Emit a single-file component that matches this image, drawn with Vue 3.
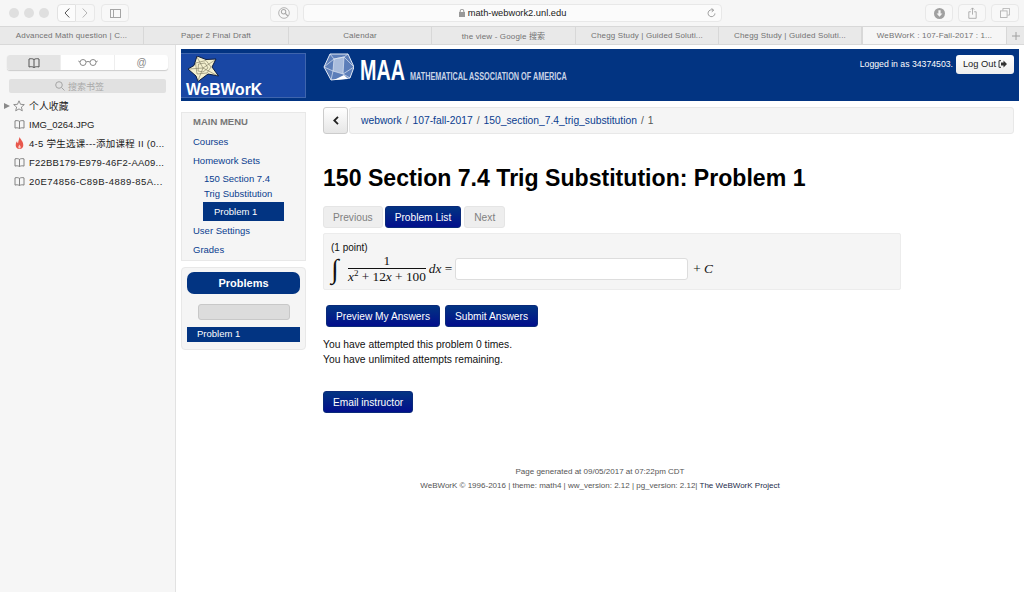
<script setup>
const tabs = [
  { t: 'Advanced Math question | C...', w: 144 },
  { t: 'Paper 2 Final Draft', w: 145 },
  { t: 'Calendar', w: 143 },
  { t: 'the view - Google 搜索', w: 144 },
  { t: 'Chegg Study | Guided Soluti...', w: 143 },
  { t: 'Chegg Study | Guided Soluti...', w: 143 },
  { t: 'WeBWorK : 107-Fall-2017 : 1...', w: 145, active: true },
]
const bookmarks = [
  { t: 'IMG_0264.JPG', ls: 0 },
  { t: '4-5 学生选课---添加课程 II (0...', fire: true, ls: 0.28 },
  { t: 'F22BB179-E979-46F2-AA09...', ls: 0.22 },
  { t: '20E74856-C89B-4889-85A...', ls: 0.45 },
]
</script>

<template>
  <div class="win">
    <header class="toolbar">
      <div class="lights"><i></i><i></i><i></i></div>
      <div class="navpair">
        <span class="tb first"><svg width="6" height="10" viewBox="0 0 6 10"><path d="M5.300.5 1 5l4.300 4.500" fill="none" stroke="#555" stroke-width="1"/></svg></span>
        <span class="tb second"><svg width="6" height="10" viewBox="0 0 6 10"><path d="M.7.5 5 5 .7 9.500" fill="none" stroke="#b5b5b5" stroke-width="1"/></svg></span>
      </div>
      <span class="tb side"><svg width="11" height="9" viewBox="0 0 11 9"><rect x=".5" y=".5" width="10" height="8" fill="none" stroke="#a5a5a5"/><path d="M3.500 1v7" stroke="#a5a5a5"/></svg></span>
      <span class="tb privacy"><svg width="12" height="12" viewBox="0 0 14 14"><circle cx="7" cy="7" r="6.200" fill="none" stroke="#a8a8a8"/><circle cx="6.500" cy="5.500" r="2.600" fill="none" stroke="#a8a8a8" stroke-width="1.200"/><path d="M8.500 7.500l3 3" stroke="#a8a8a8" stroke-width="1.400"/></svg></span>
      <div class="url">
        <span class="urltext"><svg width="6" height="8" viewBox="0 0 6 8"><rect y="3" width="6" height="5" fill="#999"/><path d="M1.200 3.500V2a1.800 1.800 0 0 1 3.600 0v1.500" fill="none" stroke="#999"/></svg>math-webwork2.unl.edu</span>
        <svg class="reload" width="9" height="10" viewBox="0 0 11 12"><path d="M7.500 2.600A4.200 4.200 0 1 0 9.700 6.500" fill="none" stroke="#8a8a8a"/><path d="M5.500.4 8.300 2.600 5.800 4.600" fill="none" stroke="#8a8a8a"/></svg>
      </div>
      <span class="tb right dl"><svg width="11" height="11" viewBox="0 0 14 14"><circle cx="7" cy="7" r="7" fill="#a0a0a0"/><path d="M5.600 3h2.800v4h2.300L7 11 3.300 7h2.300z" fill="#f6f6f6"/></svg></span>
      <span class="tb right"><svg width="9" height="12" viewBox="0 0 11 14"><path d="M3.500 5.500H1v8h9v-8H7.500M5.500 9V.8M3.500 2.800l2-2 2 2" fill="none" stroke="#a0a0a0"/></svg></span>
      <span class="tb right"><svg width="10" height="10" viewBox="0 0 12 12"><path d="M3.500 3V.5h8v8H9" fill="none" stroke="#adadad"/><rect x=".5" y="3.500" width="8" height="8" fill="none" stroke="#adadad"/></svg></span>
    </header>

    <nav class="tabs">
      <div v-for="(tab, i) in tabs" :key="i" class="tab" :class="{ active: tab.active }" :style="{ width: tab.w + 'px' }">{{ tab.t }}</div>
      <div class="plus"><svg width="8" height="8" viewBox="0 0 8 8"><path d="M4 0v8M0 4h8" stroke="#a0a0a0"/></svg></div>
    </nav>

    <div class="body">
      <aside class="sidebar">
        <div class="seg">
          <span class="on"><svg width="12" height="10" viewBox="0 0 12 10"><path d="M6 1.500C4.500.5 2.500.5 1 1v8c1.500-.5 3.500-.5 5 .5 1.500-1 3.500-1 5-.5V1C9.500.5 7.500.5 6 1.500zM6 1.500v8" fill="none" stroke="#555"/></svg></span>
          <span><svg width="20" height="7" viewBox="0 0 20 7"><circle cx="5" cy="3.500" r="3" fill="none" stroke="#8a8a8a"/><circle cx="15" cy="3.500" r="3" fill="none" stroke="#8a8a8a"/><path d="M8 3c1-.6 3-.6 4 0M2 3 .3 2M18 3l1.700-1" fill="none" stroke="#8a8a8a"/></svg></span>
          <span class="at">@</span>
        </div>
        <div class="search"><svg width="10" height="10" viewBox="0 0 10 10"><circle cx="4" cy="4" r="3.300" fill="none" stroke="#a5a5a5"/><path d="M6.500 6.500 9.500 9.500" stroke="#a5a5a5"/></svg>搜索书签</div>
        <div class="fav">
          <span class="tri"></span>
          <svg width="12" height="12" viewBox="0 0 12 12"><path d="M6 .8l1.500 3.500 3.800.3-2.900 2.500.9 3.700L6 8.900l-3.300 1.900.9-3.700L.7 4.600l3.800-.3z" fill="none" stroke="#777" stroke-width=".8"/></svg>
          <span>个人收藏</span>
        </div>
        <div v-for="b in bookmarks" :key="b.t" class="bm">
          <svg v-if="b.fire" width="11" height="12" viewBox="0 0 11 12"><path d="M5.800 0c.4 2.500 3.400 4 3.400 7.500A3.700 3.700 0 0 1 5.500 12a3.700 3.700 0 0 1-3.700-4.500c0-1.500.7-2.500 1.300-3.200 0 1 .3 1.700.9 2C4.500 4.500 4.800 2 5.800 0z" fill="#e8574c"/><path d="M5.500 7.500c.3 1 1.200 1.300 1.200 2.700a1.200 1.200 0 0 1-2.400 0c0-1 .9-1.700 1.200-2.700z" fill="#f9d0c8"/></svg>
          <svg v-else width="11" height="9" viewBox="0 0 12 10"><path d="M6 1.500C4.500.5 2.500.5 1 1v8c1.500-.5 3.500-.5 5 .5 1.500-1 3.500-1 5-.5V1C9.500.5 7.500.5 6 1.500zM6 1.500v8" fill="none" stroke="#777"/></svg>
          <span :style="{ letterSpacing: b.ls + 'px' }">{{ b.t }}</span>
        </div>
      </aside>

      <main class="page">
        <div class="banner">
          <div class="ww">
            <svg class="star" width="32" height="26" viewBox="0 0 32 26">
              <path d="M10 0 19 3.500 29 3 25 11 31.500 20 21 18 11 25.500 9 20 1 13 7 9.500Z" fill="#f4f0cf" stroke="#0c1c40" stroke-width="1"/>
              <path d="M16 12 10 1M16 12 28 4M16 12 30 19.500M16 12 11 24.500M16 12 2 13M11.500 8 18 7 21 12 16 16 11 15ZM8.500 7 19 4.500 24 11 20 17 10 18Z" fill="none" stroke="#6f6c54" stroke-width=".55"/>
            </svg>
            <span class="wwname">WeBWorK</span>
          </div>
          <div class="maa">
            <svg class="hex" width="31" height="28" viewBox="0 0 31 28">
              <path d="M7 1 25 1 31 14 27 25 8 27 1 14Z" fill="#5c7eb9" stroke="#e4eaf4" stroke-width="1"/>
              <path d="M11 6 21 4 20 21 10 18Z" fill="#a9bcdc"/>
              <path d="M11 27 21 22 25 26Z" fill="#fff"/>
              <path d="M7 1 11 6 21 4 25 1M21 4 31 14 20 21 27 25M20 21 10 18 8 27M10 18 1 14 11 6 10 18M11 6 21 4 20 21" fill="none" stroke="#dde5f2" stroke-width=".7"/>
            </svg>
            <span class="maaname">MAA</span>
            <span class="maafull">MATHEMATICAL ASSOCIATION OF AMERICA</span>
          </div>
          <div class="login">
            <span>Logged in as 34374503.</span>
            <span class="logout">Log Out <svg width="9" height="8" viewBox="0 0 9 8"><path d="M3 .7H1v6.600h2" fill="none" stroke="#333"/><path d="M3 2.500h2.500V.5L9 4 5.500 7.500v-2H3z" fill="#333"/></svg></span>
          </div>
        </div>

        <div class="columns">
          <div class="leftcol">
            <div class="menu">
              <div class="mhead">MAIN MENU</div>
              <a class="mi">Courses</a>
              <a class="mi">Homework Sets</a>
              <a class="sub">150 Section 7.4<br>Trig Substitution</a>
              <a class="cur">Problem 1</a>
              <a class="mi">User Settings</a>
              <a class="mi">Grades</a>
            </div>
            <div class="probs">
              <div class="phead">Problems</div>
              <div class="pbar"></div>
              <div class="pitem">Problem 1</div>
            </div>
          </div>

          <div class="content">
            <div class="crumb">
              <span class="back"><svg width="6" height="9" viewBox="0 0 6 9"><path d="M5 .8 1.300 4.500 5 8.200" fill="none" stroke="#222" stroke-width="1.800"/></svg></span>
              <span class="path"><a>webwork</a><em>/</em><a>107-fall-2017</a><em>/</em><a>150_section_7.4_trig_substitution</a><em>/</em><span class="last">1</span></span>
            </div>
            <h1>150 Section 7.4 Trig Substitution: Problem 1</h1>
            <div class="pager">
              <span class="btn off">Previous</span>
              <span class="btn blue">Problem List</span>
              <span class="btn off next">Next</span>
            </div>
            <div class="well">
              <div class="point">(1 point)</div>
              <div class="math">
                <span class="int">∫</span>
                <span class="frac"><span class="num">1</span><span class="den"><i>x</i><sup>2</sup> + 12<i>x</i> + 100</span></span>
                <span class="dx"><i>dx</i> =</span>
                <span class="input"></span>
                <span class="c">+ <i>C</i></span>
              </div>
            </div>
            <div class="actions">
              <span class="btn blue">Preview My Answers</span>
              <span class="btn blue">Submit Answers</span>
            </div>
            <p class="att">You have attempted this problem 0 times.<br>You have unlimited attempts remaining.</p>
            <div class="emailrow"><span class="btn blue">Email instructor</span></div>
            <footer class="foot">
              <div>Page generated at 09/05/2017 at 07:22pm CDT</div>
              <div>WeBWorK © 1996-2016 | theme: math4 | ww_version: 2.12 | pg_version: 2.12| <b>The WeBWorK Project</b></div>
            </footer>
          </div>
        </div>
      </main>
    </div>
  </div>
</template>

<style>
html, body { margin: 0; padding: 0; background: #fff; overflow: hidden; }
</style>

<style scoped>
.win { width: 1024px; height: 592px; overflow: hidden; font-family: "Liberation Sans", "Noto Sans CJK SC", sans-serif; display: flex; flex-direction: column; background: #fff; }
.toolbar { height: 27px; background: #f6f6f6; display: flex; align-items: center; padding: 0 0 0 9px; box-sizing: border-box; border-bottom: 1px solid #d8d8d8; flex: none; }
.lights { display: flex; gap: 5px; margin-right: 8px; }
.lights i { width: 10px; height: 10px; border-radius: 50%; background: #dfdfdf; }
.tb { height: 18px; display: inline-flex; align-items: center; justify-content: center; border: 1px solid #e8e8e8; border-radius: 4px; background: #f8f8f8; box-sizing: border-box; }
.navpair { display: flex; }
.first { width: 19px; border-radius: 4px 0 0 4px; background: #fcfcfc; border-color: #e2e2e2; }
.second { width: 19px; border-radius: 0 4px 4px 0; border-left: 0; }
.side { width: 28px; margin-left: 6px; }
.privacy { width: 28px; margin-left: 141px; }
.url { width: 419px; height: 18px; margin-left: 5px; border: 1px solid #e8e8e8; border-radius: 4px; box-sizing: border-box; background: #fbfbfb; position: relative; display: flex; align-items: center; justify-content: center; }
.urltext { font-size: 9.300px; color: #222; display: flex; align-items: center; gap: 3px; }
.reload { position: absolute; right: 5px; top: 3px; }
.right { width: 28px; margin-left: 5px; }
.dl { margin-left: 203px; }
.tabs { height: 17px; display: flex; background: #e9e9e9; border-bottom: 1px solid #d9d9d9; flex: none; }
.tab { box-sizing: border-box; height: 17px; border-right: 1px solid #d8d8d8; font-size: 8px; letter-spacing: .15px; color: #727272; display: flex; align-items: center; justify-content: center; white-space: nowrap; flex: none; }
.tab.active { background: #f6f6f6; border-left: 1px solid #d8d8d8; }
.plus { flex: 1; display: flex; align-items: center; justify-content: center; }
.body { flex: 1; display: flex; min-height: 0; }
.sidebar { width: 176px; box-sizing: border-box; background: #f6f6f6; border-right: 1px solid #e2e2e2; flex: none; padding-top: 10px; font-size: 9.500px; color: #222; }
.seg { margin-left: 7px; width: 161px; height: 15px; background: #fff; border-radius: 3px; box-shadow: 0 1px 1px #ccc; display: flex; }
.seg span { flex: 1; display: flex; align-items: center; justify-content: center; border-right: 1px solid #eee; }
.seg .on { background: #e4e4e4; border-radius: 3px 0 0 3px; }
.seg .at { font-size: 10px; color: #888; border: 0; }
.search { margin: 9px 0 0 9px; width: 157px; height: 14px; padding-right: 16px; box-sizing: border-box; background: #e1e1e1; border-radius: 2px; color: #a9a9a9; font-size: 9px; display: flex; align-items: center; justify-content: center; gap: 3px; }
.fav { margin: 6px 0 1.500px 4px; display: flex; align-items: center; height: 14px; font-size: 9.800px; letter-spacing: .1px; }
.fav svg { margin: 0 4px 0 3px; }
.tri { width: 0; height: 0; border-left: 6px solid #8a8a8a; border-top: 3.500px solid transparent; border-bottom: 3.500px solid transparent; }
.bm { height: 19px; margin-left: 14px; display: flex; align-items: center; gap: 4px; white-space: nowrap; }
.bm svg { width: 11px; flex: none; }
.page { flex: 1; min-width: 0; }
.banner { margin: 4px 0 0 5px; height: 52px; background: #023482; width: 838px; display: flex; }
.ww { width: 124px; margin-top: 4px; background: #1947a4; border: 1px solid #3f65ad; border-left: 0; flex: none; box-sizing: content-box; height: 43px; position: relative; }
.star { position: absolute; left: 6px; top: 2px; }
.wwname { position: absolute; left: 5px; bottom: -3px; color: #fff; font-weight: 700; font-size: 15.700px; line-height: 20px; }
.maa { display: flex; align-items: flex-start; width: 300px; }
.hex { margin: 4px 0 0 17px; flex: none; }
.maaname { margin: 5px 0 0 6px; width: 45px; flex: none; color: #fff; font-size: 29px; line-height: 32px; font-weight: 700; transform: scaleX(.68); transform-origin: left; }
.maafull { margin: 21.500px 0 0 5px; width: 157px; flex: none; color: #c9d3e6; font-size: 10px; line-height: 12px; font-weight: 700; white-space: nowrap; transform: scaleX(.727); transform-origin: left; }
.login { margin: 6px 5px 0 auto; height: 18px; display: flex; align-items: center; gap: 3px; font-size: 8.700px; color: #fff; }
.logout { width: 58px; height: 19px; background: linear-gradient(#fff, #eee); border-radius: 3px; color: #222; display: flex; align-items: center; justify-content: center; gap: 2px; box-sizing: border-box; font-size: 9.300px; }
.columns { display: flex; margin-left: 5px; margin-top: 6px; }
.leftcol { width: 125px; flex: none; padding-top: 5px; }
.menu { background: #f5f5f5; border: 1px solid #e8e8e8; box-sizing: border-box; height: 149px; font-size: 9.500px; padding-left: 11px; }
.mhead { color: #777; font-weight: 700; height: 19px; line-height: 18px; }
.mi { display: block; height: 19px; line-height: 19px; color: #0a3d8f; }
.sub { display: block; color: #0a3d8f; margin-left: 11px; line-height: 14.500px; padding: 2px 0 1px; }
.cur { display: block; margin-left: 10px; width: 81px; height: 19px; line-height: 19px; background: #023482; color: #fff; padding-left: 11px; box-sizing: border-box; }
.probs { margin-top: 6px; height: 83px; background: #f5f5f5; border: 1px solid #e8e8e8; border-radius: 4px; box-sizing: border-box; padding: 4px 5px; }
.phead { height: 22px; line-height: 22px; background: #023482; color: #fff; text-align: center; font-weight: 700; font-size: 11px; border-radius: 7px; }
.pbar { height: 16px; width: 92px; margin: 10px auto 7px; background: #dcdcdc; border: 1px solid #c8c8c8; border-radius: 3px; box-sizing: border-box; }
.pitem { height: 15px; line-height: 14px; background: #023482; color: #fff; font-size: 9.500px; padding-left: 10px; }
.content { margin-left: 17px; width: 578px; font-size: 10px; color: #111; }
.crumb { width: 691px; height: 27px; display: flex; font-size: 10.300px; }
.back { width: 25px; height: 27px; background: linear-gradient(#fff, #e6e6e6); border: 1px solid #ccc; border-radius: 3px; box-sizing: border-box; display: flex; align-items: center; justify-content: center; flex: none; }
.path { flex: 1; margin-left: 1px; background: #f5f5f5; border: 1px solid #e8e8e8; border-radius: 3px; display: flex; align-items: center; padding-left: 11px; color: #555; }
.path a { color: #0a3d8f; }
.path em { font-style: normal; margin: 0 4px; }
h1 { margin: 28px 0 0; font-size: 23.100px; line-height: 32px; font-weight: 700; color: #000; white-space: nowrap; }
.pager { display: flex; gap: 2px; margin-top: 12px; }
.next { margin-left: 1px; }
.btn { display: inline-flex; align-items: center; justify-content: center; height: 22px; padding: 0 9px; box-sizing: border-box; font-size: 10.200px; border-radius: 3px; }
.off { background: #eee; border: 1px solid #e5e5e5; color: #808080; }
.blue { background: linear-gradient(#023482, #020f8c); border: 1px solid #0a2a7a; color: #fff; }
.well { width: 578px; height: 57px; margin-top: 5px; background: #f5f5f5; border: 1px solid #ececec; box-sizing: border-box; padding: 9px 7px 0; border-radius: 2px; }
.point { font-size: 10px; line-height: 10px; }
.math { display: flex; align-items: center; font-family: "Liberation Serif", serif; height: 32px; font-size: 13.300px; }
.int { font-size: 27px; line-height: 32px; width: 17px; flex: none; font-style: italic; margin-top: -1px; }
.frac { display: inline-flex; flex-direction: column; align-items: center; }
.num { line-height: 15px; margin-top: -1px; }
.den { border-top: 1px solid #111; line-height: 15px; white-space: nowrap; }
.den sup { font-size: 9px; line-height: 0; }
.dx { margin-left: 3px; white-space: nowrap; }
.input { width: 233px; height: 22px; background: #fff; border: 1px solid #ddd; border-radius: 3px; margin-left: 3px; box-sizing: border-box; }
.c { margin-left: 5px; white-space: nowrap; }
.actions { display: flex; gap: 5px; margin: 15px 0 0 3px; }
.att { margin: 10px 0 0; font-size: 10.300px; line-height: 15px; color: #111; }
.emailrow { margin-top: 24px; height: 22px; display: flex; }
.foot { width: 554px; text-align: center; margin-top: 52px; font-size: 8px; line-height: 14px; color: #555; white-space: nowrap; }
.foot b { font-weight: 400; color: #1c2b4a; }
</style>
